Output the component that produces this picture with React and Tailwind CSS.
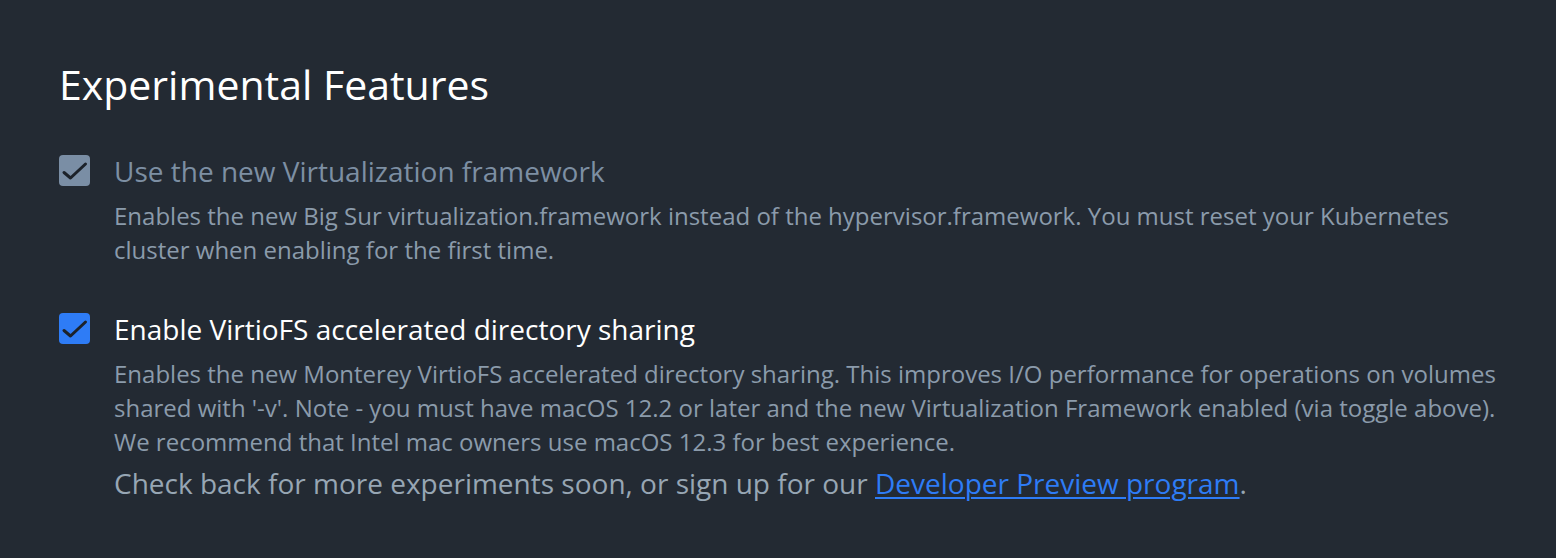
import React from "react";

const features = [
  {
    label: "Use the new Virtualization framework",
    description:
      "Enables the new Big Sur virtualization.framework instead of the hypervisor.framework. You must reset your Kubernetes cluster when enabling for the first time.",
    disabled: true,
  },
  {
    label: "Enable VirtioFS accelerated directory sharing",
    description:
      "Enables the new Monterey VirtioFS accelerated directory sharing. This improves I/O performance for operations on volumes shared with '-v'. Note - you must have macOS 12.2 or later and the new Virtualization Framework enabled (via toggle above). We recommend that Intel mac owners use macOS 12.3 for best experience.",
    disabled: false,
  },
];

const CheckBox = ({ disabled }) => (
  <span
    className={
      disabled
        ? "block h-[31px] w-[31px] shrink-0 rounded-[4px] bg-[#7a8ea5]"
        : "block h-[31px] w-[31px] shrink-0 rounded-[4px] bg-[#2e7cf6]"
    }
  >
    <svg width="31" height="31" viewBox="0 0 31 31" fill="none">
      <path
        d="M5 17.5l6.5 5.5L26.5 9"
        stroke="#1c222a"
        strokeWidth="3"
        strokeLinecap="round"
        strokeLinejoin="round"
      />
    </svg>
  </span>
);

export default function App() {
  return (
    <div
      className="min-h-[558px] w-full bg-[#232a33] pl-[59px] pt-[56px]"
      style={{ fontFamily: "'Open Sans', sans-serif" }}
    >
      <h1 className="text-[41px] leading-[56px] font-normal text-white">Experimental Features</h1>

      <div className="mt-[39px] flex flex-col gap-[42px]">
        {features.map((f, i) => (
          <div key={i} className="flex gap-[24px]">
            <div className="pt-[4px]">
              <CheckBox disabled={f.disabled} />
            </div>
            <div className="w-[1400px]">
              <div
                className={
                  f.disabled
                    ? "text-[28px] leading-[40px] text-[#7d8fa3]"
                    : "text-[28px] leading-[40px] text-white"
                }
              >
                {f.label}
              </div>
              <p className="mt-[8px] text-[24px] leading-[34px] text-[#8b9bab]">{f.description}</p>
            </div>
          </div>
        ))}
      </div>

      <p className="ml-[55px] mt-[4px] text-[28px] leading-[40px] text-[#97a6b4]">
        Check back for more experiments soon, or sign up for our{" "}
        <a href="#" className="text-[#2e7cf6] underline decoration-2 underline-offset-[3px]">
          Developer Preview program
        </a>
        .
      </p>
    </div>
  );
}
